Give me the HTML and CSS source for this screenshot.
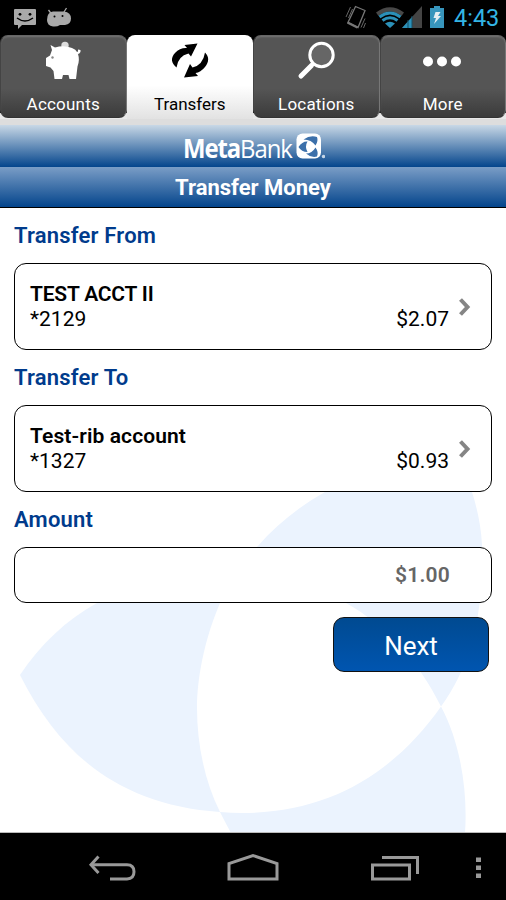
FILE: index.html
```html
<!DOCTYPE html>
<html lang="en">
<head>
<meta charset="utf-8">
<title>Transfer Money</title>
<link rel="stylesheet" href="styles.css">
</head>
<body>
<header class="status">
  <svg class="notices" width="80" height="35" viewBox="0 0 80 35">
    <path fill="#a9a9a9" d="M15 9h20q1 0 1 1v14q0 1-1 1H22l-4 4v-4h-3q-1 0-1-1V10q0-1 1-1z"/>
    <circle cx="20" cy="14.300" r="1.400"/><circle cx="30" cy="14.300" r="1.400"/>
    <path d="M17 18q8 6 16 0" fill="none" stroke="#000" stroke-width="1.400"/>
    <path d="M48.500 10l3 4M66.500 8l-2.500 4" stroke="#a9a9a9" stroke-width="1.300"/>
    <path fill="#a9a9a9" d="M47 20q0-8 6-8.500h11q7 1 7 7 0 5.500-6 6.500h-5q-3 2-7 1.500-6-1-6-6.500z"/>
    <circle cx="54.500" cy="16.500" r="1"/><circle cx="62.500" cy="16" r="1"/>
  </svg>
  <svg class="signals" width="106" height="35" viewBox="343 0 106 35">
    <path d="M355.500 6.500l9.500 4-7 17-10-5z" fill="none" stroke="#777" stroke-width="1.300"/>
    <path d="M347.500 22.500l10 5" stroke="#777" stroke-width="2.400"/>
    <path d="M346 17l4.500-10M348.500 18l4-9M361 27.500l4-9M363.500 28l2-5" stroke="#666"/>
    <path d="M376 12.500Q390 2 404 12.500L401.500 16Q390 7 378.500 16z" fill="#484848"/>
    <g fill="none" stroke="#2b90b8" stroke-width="3"><path d="M379.500 17Q390 9 400.500 17"/><path d="M382.500 20.500Q390 15 397.500 20.500"/></g>
    <path d="M385 23.500Q390 20 395 23.500L390 28z" fill="#2b90b8"/>
    <path d="M422 6v22h-20z" fill="#444"/><path d="M412 17v11h-10z" fill="#2b90b8"/><path d="M408 20v8M412 16v12" stroke="#174e65"/>
    <path d="M434 6h6v2h4v20h-14V8h4z" fill="#3795bc"/>
    <path d="M435.500 12h5l-2.500 4h3l-7 8 2-6h-2.500z" fill="#e4eef2"/>
  </svg>
  <span class="clock">4:43</span>
</header>
<nav class="tabs">
  <a class="tab">
    <svg width="40" height="44" viewBox="43 39 40 44"><circle cx="65" cy="45.500" r="3.700" fill="#ddd"/><path fill="#fff" d="M50.500 45l4.500 2.500q9-2.500 17 .5 4 1.500 5 4 1.500 0 1-2.500l2.500.5q.5 3-2.500 4 2 6-.5 12.500L76 79h-6.500l-1-4H63l-1 4h-7.500l-1-8-3-3.500-4.500-1.500v-8l4-2.500 2-5.500z"/><circle cx="52.500" cy="57.500" r="1.200" fill="#888"/></svg>
    <span>Accounts</span>
  </a>
  <a class="tab on">
    <svg width="40" height="44" viewBox="170 39 40 44"><path d="M176.500 67.500C171 63 170.500 58 175 53Q180 47.500 187 48L184.500 45 197.500 43.500 191 56.500 188.500 53.500Q178 56 176.500 67.500zM205 52.500C209.500 57 209 62 205 67Q200.500 72.500 195.500 73L198 76 184 77.500 190 64 192.500 67.500Q203 65 205 52.500z"/></svg>
    <span>Transfers</span>
  </a>
  <a class="tab">
    <svg width="40" height="44" viewBox="296 39 40 44"><circle cx="321.500" cy="55" r="11.700" fill="#666" stroke="#fff" stroke-width="3"/><path d="M311.500 65.500L301 76" stroke="#fff" stroke-width="5" stroke-linecap="round"/></svg>
    <span>Locations</span>
  </a>
  <a class="tab">
    <svg width="40" height="44" viewBox="422 39 40 44" fill="#fff"><circle cx="427" cy="61.500" r="5"/><circle cx="441" cy="61.500" r="5"/><circle cx="455" cy="61.500" r="5"/></svg>
    <span>More</span>
  </a>
</nav>
<div class="brand">
  <span class="word"><b>Meta</b>Bank</span>
  <svg width="30" height="30" viewBox="295 131 30 30"><rect x="296.500" y="133.500" width="24.500" height="25" rx="6" fill="#fff"/><g fill="#3c70aa"><path d="M298.500 147q4-6 9-5.500-3 5 0 10.500-6 0-9-5z"/><path d="M303.500 139.500q7-5 13.500-2.500 1.500 4-1.500 8.500-4-6-12-6z"/><path d="M315.500 147.500q3.500 5 1.500 9-6 1.500-11-3 6 0 9.500-6z"/></g><circle cx="323.500" cy="156.500" r="1.700" fill="#c5d5e6"/></svg>
</div>
<h1 class="title">Transfer Money</h1>
<main class="content">
  <svg class="mark" width="506" height="625" viewBox="0 208 506 625" fill="#ebf3fe">
    <path d="M20 675C40 645 66 620 97 603C140 578 185 568 235 568C228 580 224 592 220 603C200 650 197 690 197 708C197 745 205 782 220 812C120 805 60 755 20 675Z"/>
    <path d="M325 492C300 506 277 524 257 547L240 568C280 570 315 582 346 603C385 625 418 660 441 706.500C470 668 485 610 482 545C481 525 477 508 472 492Z"/>
    <path d="M220 812Q225 822 231 833H465C468 790 460 742 441 706.500C395 772 330 813 242 813Q231 813 220 812Z"/>
  </svg>
  <h2>Transfer From</h2>
  <section class="card">
    <div class="acct"><b class="caps">TEST ACCT II</b><span>*2129</span></div>
    <span class="sum">$2.07</span>
    <svg class="chev" width="14" height="20" viewBox="0 0 14 20"><path d="M2.500 2.500l7 7.500-7 7.500" fill="none" stroke="#858585" stroke-width="4"/></svg>
  </section>
  <h2>Transfer To</h2>
  <section class="card">
    <div class="acct"><b>Test-rib account</b><span>*1327</span></div>
    <span class="sum">$0.93</span>
    <svg class="chev" width="14" height="20" viewBox="0 0 14 20"><path d="M2.500 2.500l7 7.500-7 7.500" fill="none" stroke="#858585" stroke-width="4"/></svg>
  </section>
  <h2>Amount</h2>
  <div class="amount">$1.00</div>
  <button class="next">Next</button>
</main>
<footer class="keys">
  <svg width="506" height="67" viewBox="0 833 506 67" fill="none" stroke="#999" stroke-width="3">
    <path d="M92 864.700h35q7 0 7 7t-7 7.300h-17"/><path d="M98.500 856.500l-7.500 8.200 7.500 8.200"/>
    <path d="M229 879v-15.500l24-8 24 8V879z"/>
    <path d="M372.500 865h37v14h-37zM382 857.500h35.500V874"/>
    <path d="M478.500 857.500v4.500m0 3.500v4.500m0 3.500v4.500" stroke-width="5"/>
  </svg>
</footer>
</body>
</html>
```

FILE: styles.css
```css
* { box-sizing: border-box; }
body {
  margin: 0;
  width: 506px;
  height: 900px;
  overflow: hidden;
  background: #fff;
  font-family: Roboto, "Liberation Sans", sans-serif;
}
svg { display: block; }
.status { display: flex; height: 35px; background: #000; }
.signals { margin-left: 263px; }
.clock { margin-left: 5px; font-size: 23.5px; line-height: 37px; color: #33b5e5; }
.tabs {
  display: grid;
  grid-template-columns: repeat(4, 1fr);
  height: 84px;
  background: linear-gradient(#000 78px, #e8e8e8 78px);
}
.tab {
  display: flex;
  flex-direction: column;
  align-items: center;
  margin: 0 0 1px;
  padding-top: 3px;
  border: 1px solid #666;
  border-right-color: #777;
  border-left-color: #444;
  border-bottom-color: #333;
  border-radius: 8px;
  background: linear-gradient(#555 65%, #3b3b3b);
  box-shadow: inset 0 2px 2px -1px #777;
  color: #fff;
  font-size: 17px;
  line-height: 20px;
  letter-spacing: .2px;
}
.tab span { margin-top: 11px; }
.tab.on {
  margin-bottom: 0;
  border-color: transparent;
  border-radius: 8px 8px 0 0;
  background: linear-gradient(#fff 60%, #e2e2e2) border-box;
  box-shadow: none;
  color: #000;
}
.tab.on span { letter-spacing: 0; }
.brand {
  display: flex;
  height: 48px;
  padding: 12px 0 0 183px;
  border-top: 6px solid #ddd;
  background: linear-gradient(#c8d8e6, #04458c);
  color: #fff;
}
.brand svg { margin-top: -6px; }
.word {
  width: 112px;
  font: 26px/22px "Open Sans", sans-serif;
  letter-spacing: -1.2px;
  white-space: nowrap;
  transform: scaleX(.92);
  transform-origin: left;
}
.title {
  height: 41px;
  margin: 0;
  border-bottom: 1px solid #000;
  background: linear-gradient(#7a9dc6, #04458c);
  color: #fff;
  font-size: 22px;
  font-weight: 700;
  line-height: 42px;
  text-align: center;
}
.content { position: relative; height: 625px; padding: 12px 14px 0; border-bottom: 1px solid #bbb; }
.mark { position: absolute; left: 0; top: 0; z-index: -1; }
h2 { margin: 0 0 12px; color: #003b8c; font-size: 22px; font-weight: 600; line-height: 31px; letter-spacing: .2px; }
.card, .amount { border: 1.500px solid #000; border-radius: 12px; background: #fff; }
.card { display: flex; height: 87px; margin-bottom: 12px; padding: 18px 19px 0 15px; font-size: 21px; line-height: 25px; }
.acct { display: flex; flex-direction: column; flex: 1; }
.acct b { font-weight: 600; letter-spacing: .1px; }
.acct .caps { letter-spacing: -.2px; }
.sum { margin-top: 25px; }
.chev { margin: 15px 0 0 9px; }
.sum, .acct span { font-weight: 400; }
.amount { height: 56px; padding-right: 41px; color: #666; font-size: 21px; font-weight: 600; line-height: 54px; letter-spacing: .2px; text-align: right; }
.next {
  display: block;
  width: 156px;
  height: 55px;
  margin: 14px 3px 0 auto;
  padding: 3px 0 0;
  border: 1px solid #111;
  border-radius: 11px;
  background: linear-gradient(#004a91, #0055b0);
  color: #fff;
  font: 26px Roboto, sans-serif;
}
.keys { height: 67px; background: #000; }
```
